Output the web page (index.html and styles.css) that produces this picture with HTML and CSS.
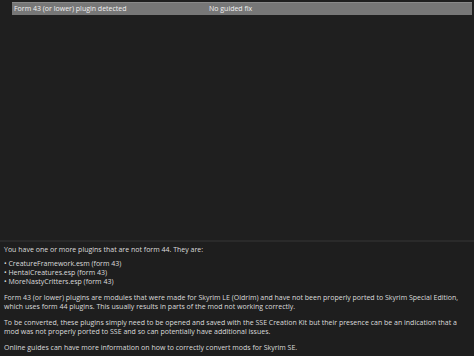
FILE: index.html
```html
<!DOCTYPE html>
<html lang="en">
<head>
    <meta charset="UTF-8">
    <title>Plugin Check</title>
    <link rel="stylesheet" href="styles.css">
</head>
<body>
    <div class="list">
        <div class="row selected">
            <span class="col-name">Form 43 (or lower) plugin detected</span>
            <span class="col-fix">No guided fix</span>
        </div>
    </div>
    <div class="details">
        <p class="intro">You have one or more plugins that are not form 44. They are:</p>
        <p>
            &bull; CreatureFramework.esm (form 43)<br>
            &bull; HentaiCreatures.esp (form 43)<br>
            &bull; MoreNastyCritters.esp (form 43)
        </p>
        <p>Form 43 (or lower) plugins are modules that were made for Skyrim LE (Oldrim) and have not been properly ported to Skyrim Special Edition, which uses form 44 plugins. This usually results in parts of the mod not working correctly.</p>
        <p>To be converted, these plugins simply need to be opened and saved with the SSE Creation Kit but their presence can be an indication that a mod was not properly ported to SSE and so can potentially have additional issues.</p>
        <p>Online guides can have more information on how to correctly convert mods for Skyrim SE.</p>
    </div>
</body>
</html>
```
FILE: styles.css
```css
body {
    margin: 0;
    background-color: #1e1e1e;
    font-family: "Open Sans", "DejaVu Sans", sans-serif;
    font-size: 7px;
    color: #dcdcdc;
    width: 474px;
    height: 356px;
    overflow: hidden;
}
.list {
    height: 238px;
    padding-top: 2px;
    padding-left: 12px;
    padding-right: 2px;
    background-color: #1f1f1f;
    border-bottom: 2px solid #2a2a2a;
}
.row {
    display: flex;
    height: 12px;
    line-height: 12px;
    color: #f0f0f0;
}
.row.selected {
    background-color: #777777;
    border-top: 1px solid #8a8a8a;
}
.col-name {
    width: 195px;
    padding-left: 2px;
}
.col-fix {
    flex: 1;
}
.details {
    padding: 3px 4px 0 4px;
    line-height: 9px;
}
.details p {
    margin: 0 0 7px 0;
}
.details p.intro {
    margin-bottom: 5px;
}
```
